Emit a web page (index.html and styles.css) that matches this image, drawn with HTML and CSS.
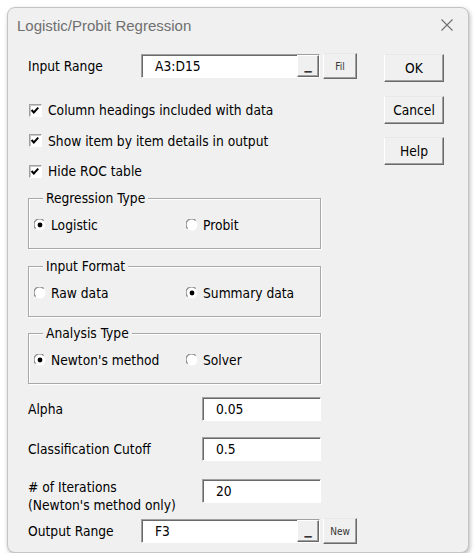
FILE: index.html
```html
<!DOCTYPE html>
<html>
<head>
<meta charset="utf-8">
<link rel="stylesheet" href="styles.css">
</head>
<body>
<div class="dialog">
  <div class="titlebar">
    <span class="title">Logistic/Probit Regression</span>
    <svg class="close" width="12" height="12" viewBox="0 0 12 12"><path d="M0.5 0.5 L11.5 11.5 M11.5 0.5 L0.5 11.5" stroke="#707070" stroke-width="1.1" fill="none"/></svg>
  </div>
  <div class="main">
    <div class="left">
      <div class="range-row">
        <span class="lbl">Input Range</span>
        <div class="range-field"><span class="val">A3:D15</span><span class="mini">_</span></div>
        <span class="small-btn">Fil</span>
      </div>

      <div class="checks">
        <div class="check"><span class="box"><svg width="13" height="13" viewBox="0 0 13 13"><path d="M2.8 6 L5.2 8.6 L10 3.4" stroke="#000" stroke-width="2.2" fill="none"/></svg></span>Column headings included with data</div>
        <div class="check"><span class="box"><svg width="13" height="13" viewBox="0 0 13 13"><path d="M2.8 6 L5.2 8.6 L10 3.4" stroke="#000" stroke-width="2.2" fill="none"/></svg></span>Show item by item details in output</div>
        <div class="check"><span class="box"><svg width="13" height="13" viewBox="0 0 13 13"><path d="M2.8 6 L5.2 8.6 L10 3.4" stroke="#000" stroke-width="2.2" fill="none"/></svg></span>Hide ROC table</div>
      </div>

      <div class="group g1">
        <span class="legend">Regression Type</span>
        <div class="radios">
          <span class="radio first"><svg width="12" height="12" viewBox="0 0 12 12"><circle cx="6" cy="6" r="5.5" fill="#fff"/><path d="M1.6 9.6 A5.2 5.2 0 0 1 9.6 1.6" stroke="#8a8a8a" stroke-width="1.3" fill="none"/><circle cx="6" cy="6" r="2.4" fill="#000"/></svg>Logistic</span>
          <span class="radio"><svg width="12" height="12" viewBox="0 0 12 12"><circle cx="6" cy="6" r="5.5" fill="#fff"/><path d="M1.6 9.6 A5.2 5.2 0 0 1 9.6 1.6" stroke="#8a8a8a" stroke-width="1.3" fill="none"/></svg>Probit</span>
        </div>
      </div>

      <div class="group g2">
        <span class="legend">Input Format</span>
        <div class="radios">
          <span class="radio first"><svg width="12" height="12" viewBox="0 0 12 12"><circle cx="6" cy="6" r="5.5" fill="#fff"/><path d="M1.6 9.6 A5.2 5.2 0 0 1 9.6 1.6" stroke="#8a8a8a" stroke-width="1.3" fill="none"/></svg>Raw data</span>
          <span class="radio"><svg width="12" height="12" viewBox="0 0 12 12"><circle cx="6" cy="6" r="5.5" fill="#fff"/><path d="M1.6 9.6 A5.2 5.2 0 0 1 9.6 1.6" stroke="#8a8a8a" stroke-width="1.3" fill="none"/><circle cx="6" cy="6" r="2.4" fill="#000"/></svg>Summary data</span>
        </div>
      </div>

      <div class="group g3">
        <span class="legend">Analysis Type</span>
        <div class="radios">
          <span class="radio first"><svg width="12" height="12" viewBox="0 0 12 12"><circle cx="6" cy="6" r="5.5" fill="#fff"/><path d="M1.6 9.6 A5.2 5.2 0 0 1 9.6 1.6" stroke="#8a8a8a" stroke-width="1.3" fill="none"/><circle cx="6" cy="6" r="2.4" fill="#000"/></svg>Newton's method</span>
          <span class="radio"><svg width="12" height="12" viewBox="0 0 12 12"><circle cx="6" cy="6" r="5.5" fill="#fff"/><path d="M1.6 9.6 A5.2 5.2 0 0 1 9.6 1.6" stroke="#8a8a8a" stroke-width="1.3" fill="none"/></svg>Solver</span>
        </div>
      </div>

      <div class="frow alpha">
        <span class="lbl">Alpha</span>
        <div class="edit">0.05</div>
      </div>
      <div class="frow cutoff">
        <span class="lbl">Classification Cutoff</span>
        <div class="edit">0.5</div>
      </div>
      <div class="frow iter">
        <span class="lbl two">#&nbsp;of Iterations<br>(Newton's method only)</span>
        <div class="edit">20</div>
      </div>

      <div class="range-row out">
        <span class="lbl">Output Range</span>
        <div class="range-field"><span class="val">F3</span><span class="mini">_</span></div>
        <span class="small-btn">New</span>
      </div>
    </div>

    <div class="right">
      <span class="btn">OK</span>
      <span class="btn">Cancel</span>
      <span class="btn">Help</span>
    </div>
  </div>
</div>
</body>
</html>
```

FILE: styles.css
```css
html, body {
  margin: 0;
  background: #ffffff;
}
body {
  font-family: "DejaVu Sans Condensed", "DejaVu Sans", "Liberation Sans", sans-serif;
  font-stretch: condensed;
  font-size: 13.7px;
  color: #000;
}

.dialog {
  margin: 7px 0 0 7px;
  width: 462px;
  height: 546px;
  box-sizing: border-box;
  background: #f0f0f0;
  border: 1px solid #c4c4c4;
  border-radius: 8px;
  box-shadow: 1px 2px 4px rgba(0, 0, 0, 0.28);
}

.titlebar {
  height: 34px;
  display: flex;
  align-items: center;
  justify-content: space-between;
  padding: 0 15px 0 9px;
}
.title {
  font-family: "Liberation Sans", Arial, sans-serif;
  font-stretch: normal;
  font-size: 15px;
  color: #6f6f6f;
}
.close {
  display: block;
}

.main {
  display: flex;
  padding: 11px 0 0 20px;
}
.left {
  width: 329px;
}
.right {
  margin-left: 27px;
  padding-top: 1px;
  display: flex;
  flex-direction: column;
  gap: 13.5px;
}

.btn {
  width: 60px;
  height: 28px;
  box-sizing: border-box;
  display: flex;
  align-items: center;
  justify-content: center;
  background: #f0f0f0;
  border: 1px solid;
  border-color: #e8e8e8 #696969 #696969 #ffffff;
  box-shadow: inset -1px -1px 0 #a0a0a0;
}

.range-row {
  display: flex;
  align-items: center;
  height: 26px;
}
.lbl {
  display: block;
}
.range-row .lbl {
  width: 113px;
}
.range-field {
  width: 179px;
  height: 24px;
  box-sizing: border-box;
  display: flex;
  background: #fff;
  border: 1px solid;
  border-color: #a0a0a0 #ffffff #ffffff #a0a0a0;
  box-shadow: inset 1px 1px 0 #696969;
}
.val {
  flex: 1;
  padding-left: 13px;
  line-height: 22px;
}
.mini {
  width: 22px;
  box-sizing: border-box;
  background: #f0f0f0;
  border: 1px solid;
  border-color: #ffffff #696969 #696969 #ffffff;
  box-shadow: inset -1px -1px 0 #a0a0a0;
  font-family: "Liberation Sans", Arial, sans-serif;
  font-weight: bold;
  font-size: 13px;
  line-height: 14px;
  padding-top: 3px;
  text-align: center;
  text-shadow: 0 0.7px 0 #000, 0 -0.3px 0 #000;
}
.small-btn {
  margin-left: 3px;
  width: 34px;
  height: 26px;
  box-sizing: border-box;
  display: flex;
  align-items: center;
  justify-content: center;
  font-size: 10px;
  color: #333;
  background: #f0f0f0;
  border: 1px solid;
  border-color: #e8e8e8 #696969 #696969 #ffffff;
  box-shadow: inset -1px -1px 0 #a0a0a0;
}

.checks {
  margin-top: 16px;
}
.check {
  display: flex;
  align-items: center;
  height: 30.5px;
  padding-left: 1px;
}
.box {
  width: 13px;
  height: 13px;
  box-sizing: border-box;
  margin-right: 6px;
  background: #fff;
  border: 1px solid;
  border-color: #a0a0a0 #ffffff #ffffff #a0a0a0;
  box-shadow: inset 1px 1px 0 #c8c8c8;
  display: flex;
}
.box svg {
  display: block;
  margin: -1px 0 0 -1px;
}

.group {
  width: 293px;
  height: 51px;
  box-sizing: border-box;
  border: 1px solid #a8a8a8;
  box-shadow: inset 1px 1px 0 #fff, 1px 1px 0 #fff;
}
.g1 { margin-top: 11.5px; }
.g2 { margin-top: 17px; }
.g3 { margin-top: 16px; }

.legend {
  display: table;
  margin: -10px 0 0 14px;
  padding: 0 3px;
  line-height: 18px;
  background: #f0f0f0;
}
.radios {
  display: flex;
  align-items: center;
  height: 20px;
  margin-top: 8px;
  padding-left: 5px;
}
.radio {
  display: flex;
  align-items: center;
}
.radio svg {
  display: block;
  margin-right: 5px;
}
.radio.first {
  width: 152px;
}

.frow {
  display: grid;
  grid-template-columns: 174px 119px;
  align-items: center;
}
.edit {
  height: 24px;
  box-sizing: border-box;
  padding-left: 13px;
  line-height: 22px;
  background: #fff;
  border: 1px solid;
  border-color: #a0a0a0 #ffffff #ffffff #a0a0a0;
  box-shadow: inset 1px 1px 0 #696969;
}
.alpha { margin-top: 13px; }
.cutoff { margin-top: 16px; }
.iter {
  margin-top: 17px;
  align-items: start;
}
.iter .edit {
  margin-top: 1px;
}
.two {
  line-height: 18px;
}
.out {
  margin-top: 4px;
}
```
